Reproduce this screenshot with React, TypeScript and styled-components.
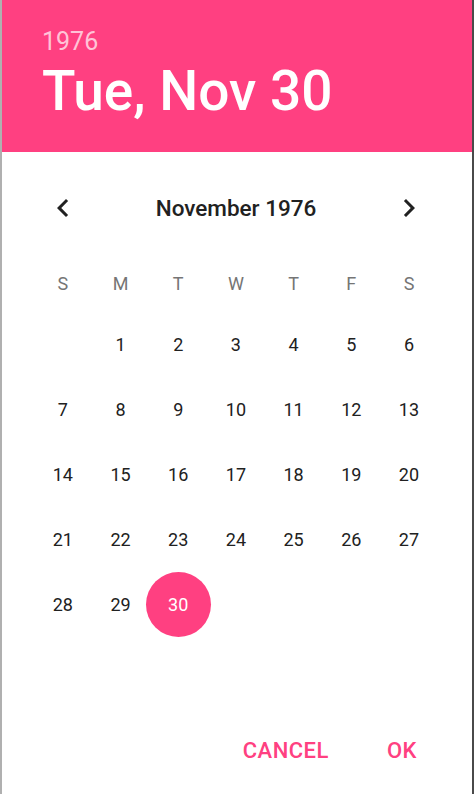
import React from "react";
import styled, { createGlobalStyle } from "styled-components";

const WEEKDAYS = ["S", "M", "T", "W", "T", "F", "S"];
const FIRST_DAY = 1; // Nov 1 1976 is a Monday
const DAYS_IN_MONTH = 30;
const SELECTED = 30;

const PINK = "#ff4081";

const GlobalStyle = createGlobalStyle`
  html, body {
    margin: 0;
    padding: 0;
    height: 100%;
  }
  body {
    background: linear-gradient(to right, #b0b0b0 50%, #4a4a4a 50%);
    font-family: Roboto, "Noto Sans", sans-serif;
    -webkit-font-smoothing: antialiased;
  }
  #root {
    height: 100%;
  }
`;

function Chevron({ dir }: { dir: "left" | "right" }) {
  return (
    <svg width="36" height="36" viewBox="0 0 24 24" fill="#212121">
      {dir === "left" ? (
        <path d="M15.41 7.41L14 6l-6 6 6 6 1.41-1.41L10.83 12z" />
      ) : (
        <path d="M8.59 16.59L10 18l6-6-6-6-1.41 1.41L13.17 12z" />
      )}
    </svg>
  );
}

function App() {
  const cells: (number | null)[] = [];
  for (let i = 0; i < FIRST_DAY; i++) cells.push(null);
  for (let d = 1; d <= DAYS_IN_MONTH; d++) cells.push(d);

  return (
    <>
      <GlobalStyle />
      <Dialog>
        <Header>
          <Year>1976</Year>
          <DateTitle>Tue, Nov 30</DateTitle>
        </Header>

        <Body>
          <MonthNav>
            <NavButton aria-label="previous month">
              <Chevron dir="left" />
            </NavButton>
            <MonthLabel>November 1976</MonthLabel>
            <NavButton aria-label="next month">
              <Chevron dir="right" />
            </NavButton>
          </MonthNav>

          <WeekRow>
            {WEEKDAYS.map((w, i) => (
              <WeekDay key={"w-" + i}>{w}</WeekDay>
            ))}
          </WeekRow>

          <DayGrid>
            {cells.map((d, i) => (
              <DayCell key={"d-" + i}>
                {d !== null && <Day $selected={d === SELECTED}>{d}</Day>}
              </DayCell>
            ))}
          </DayGrid>
        </Body>

        <Footer>
          <TextButton>CANCEL</TextButton>
          <TextButton>OK</TextButton>
        </Footer>
      </Dialog>
    </>
  );
}

const Dialog = styled.div`
  box-sizing: border-box;
  margin: 0 2px;
  width: 470px;
  min-height: 100%;
  background: #fff;
  display: flex;
  flex-direction: column;
`;

const Header = styled.header`
  background: ${PINK};
  height: 152px;
  box-sizing: border-box;
  padding: 28px 40px 0;
  color: #fff;
`;

const Year = styled.div`
  font-size: 25px;
  line-height: 28px;
  color: rgba(255, 255, 255, 0.7);
`;

const DateTitle = styled.div`
  margin-top: 3px;
  font-size: 55px;
  line-height: 64px;
  font-weight: 500;
`;

const Body = styled.div`
  padding: 28px 32px 0;
`;

const MonthNav = styled.div`
  height: 56px;
  display: flex;
  align-items: center;
  justify-content: space-between;
  padding: 0 13px 0 11px;
`;

const NavButton = styled.button`
  border: 0;
  background: none;
  padding: 0;
  width: 36px;
  height: 36px;
  display: flex;
  align-items: center;
  justify-content: center;
  cursor: pointer;
`;

const MonthLabel = styled.div`
  font-size: 22.5px;
  font-weight: 500;
  color: #212121;
`;

const WeekRow = styled.div`
  margin-top: 18px;
  height: 58px;
  display: grid;
  grid-template-columns: repeat(7, 57.7px);
  align-items: center;
`;

const WeekDay = styled.div`
  text-align: center;
  font-size: 18px;
  color: #757575;
`;

const DayGrid = styled.div`
  display: grid;
  grid-template-columns: repeat(7, 57.7px);
  grid-auto-rows: 65px;
`;

const DayCell = styled.div`
  display: flex;
  align-items: center;
  justify-content: center;
`;

const Day = styled.div<{ $selected?: boolean }>`
  flex: none;
  width: 65px;
  height: 65px;
  border-radius: 50%;
  display: flex;
  align-items: center;
  justify-content: center;
  font-size: 18px;
  color: ${(p) => (p.$selected ? "#fff" : "#212121")};
  background: ${(p) => (p.$selected ? PINK : "transparent")};
`;

const Footer = styled.div`
  margin-top: auto;
  display: flex;
  justify-content: flex-end;
  gap: 26px;
  padding: 0 39px 20px 0;
`;

const TextButton = styled.button`
  border: 0;
  background: none;
  height: 48px;
  padding: 0 16px;
  font-family: Roboto, "Noto Sans", sans-serif;
  font-size: 22px;
  font-weight: 500;
  letter-spacing: 0.5px;
  color: ${PINK};
  cursor: pointer;
`;

export default App;
